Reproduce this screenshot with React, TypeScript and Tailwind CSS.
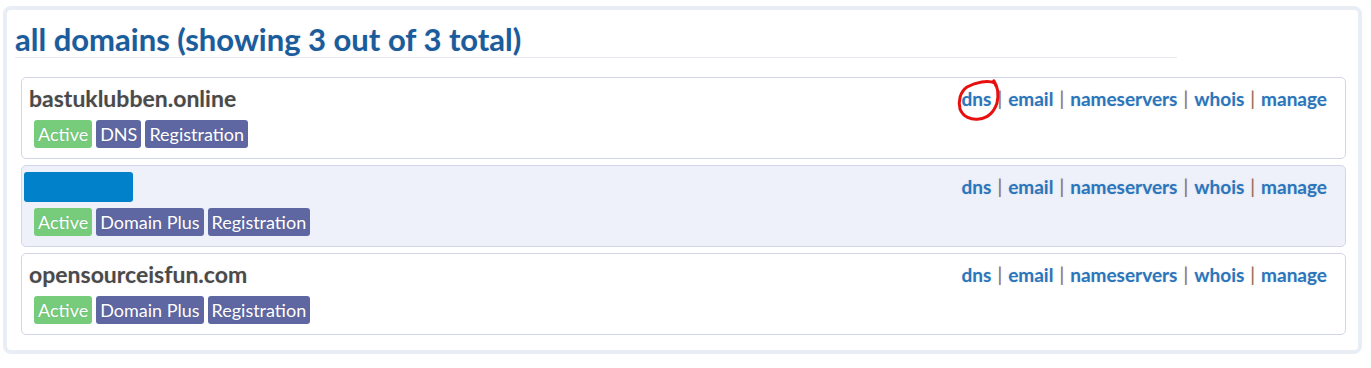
import React from 'react'

type Domain = {
  name: string | null
  badges: string[]
  highlight?: boolean
  circled?: boolean
}

const domains: Domain[] = [
  { name: 'bastuklubben.online', badges: ['DNS', 'Registration'], circled: true },
  { name: null, badges: ['Domain Plus', 'Registration'], highlight: true },
  { name: 'opensourceisfun.com', badges: ['Domain Plus', 'Registration'] },
]

const links = ['dns', 'email', 'nameservers', 'whois', 'manage']

function Badge({ label, green }: { label: string; green?: boolean }) {
  return (
    <span
      className={
        'inline-flex h-[28px] items-center rounded-[3px] px-[4px] text-[18px] leading-none text-white ' +
        (green ? 'bg-[#77cc7c]' : 'bg-[#5f67a3]')
      }
    >
      {label}
    </span>
  )
}

// hand drawn red ring around the first "dns" link
function RedRing() {
  return (
    <svg
      className="pointer-events-none absolute left-[-6px] top-[-6px]"
      width="47"
      height="43"
      viewBox="0 0 47 43"
      fill="none"
    >
      <path
        d="M39 4 C32 1 20 3 11 8 C4 13 2 22 4 30 C7 38 15 41 23 40 C32 39 38 33 41 24 C43 15 42 8 38 2 C37 1 39 4 40 7"
        stroke="#e8100f"
        strokeWidth="3"
        strokeLinecap="round"
      />
    </svg>
  )
}

function DomainRow({ d }: { d: Domain }) {
  return (
    <div
      className={
        'rounded-[5px] border border-[#d3d6ea] pb-[10px] pl-[7px] pr-[18px] pt-[6px] ' +
        (d.highlight ? 'bg-[#eef1fa]' : 'bg-white')
      }
    >
      <div className="flex h-[28px] items-start justify-between">
        {d.name ? (
          <span className="text-[23px] font-bold leading-[28px] text-[#4a4a4a]">{d.name}</span>
        ) : (
          <span className="-ml-[5px] h-[30px] w-[109px] rounded-[3px] bg-[#0081c9]" />
        )}
        <div className="flex pt-[1px] text-[19px] font-bold leading-[28px] text-[#2a76bd]">
          {links.map((l, i) => (
            <React.Fragment key={l}>
              {i > 0 && <span className="mx-[6px] font-normal text-[#8c6a4f]">|</span>}
              <span className={d.circled && i === 0 ? 'relative' : ''}>
                {l}
                {d.circled && i === 0 && <RedRing />}
              </span>
            </React.Fragment>
          ))}
        </div>
      </div>
      <div className="mt-[8px] flex gap-[4px] pl-[5px]">
        <Badge label="Active" green />
        {d.badges.map(b => (
          <Badge key={b} label={b} />
        ))}
      </div>
    </div>
  )
}

export default function App() {
  return (
    <div className="min-h-[368px] bg-white pl-[3px] pr-[9px] pt-[6px] font-['Lato','Noto_Sans',sans-serif] [text-shadow:0_0_2px_rgba(0,0,0,0.12)]">
      <div className="rounded-[8px] border-4 border-[#e9eef6] pb-[15px] pl-[8px] pr-[12px] pt-[11px]">
        <h2 className="w-[1162px] border-b border-[#e8eaef] text-[31px] font-bold leading-[36px] text-[#1a5c9c]">
          all domains (showing 3 out of 3 total)
        </h2>
        <div className="ml-[6px] mt-[19px] flex flex-col gap-[6px]">
          {domains.map((d, i) => (
            <DomainRow key={i} d={d} />
          ))}
        </div>
      </div>
    </div>
  )
}
